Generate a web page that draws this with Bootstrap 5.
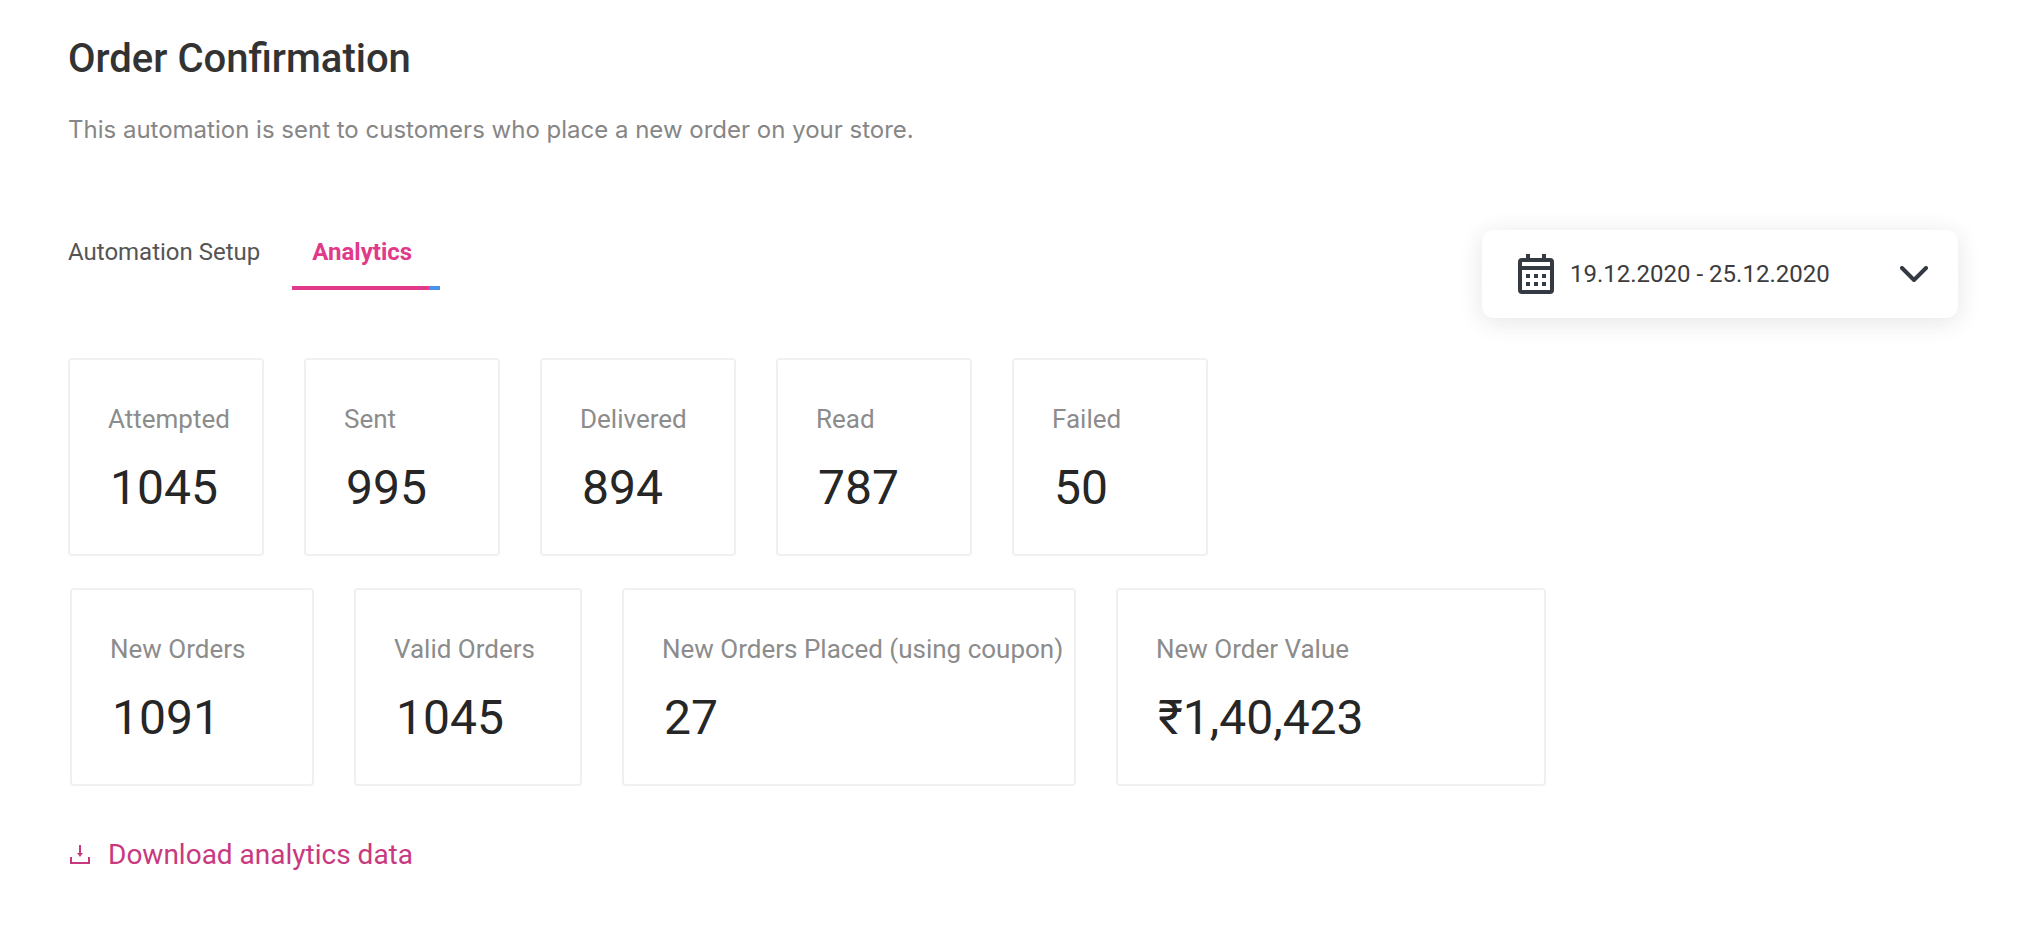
<!DOCTYPE html>
<html lang="en">
<head>
<meta charset="utf-8">
<meta name="viewport" content="width=device-width, initial-scale=1">
<title>Order Confirmation</title>
<link rel="stylesheet" href="https://cdn.jsdelivr.net/npm/bootstrap@5.3.0/dist/css/bootstrap.min.css">
<style>
  body { font-family: Roboto, "Liberation Sans", sans-serif; color: #262626; background: #fff; }
  .page { padding: 35px 84px 40px 68px; }
  .page-title { font-size: 40px; line-height: 48px; font-weight: 500; color: #333; }
  .page-note { font-family: Inter, "Liberation Sans", sans-serif; font-size: 24px; line-height: 32px; color: #868686; margin-top: 31px; }
  .toolbar { margin-top: 84px; }
  .view-tabs { gap: 32px; padding-top: 4px; }
  .view-tab { font-size: 24px; line-height: 36px; color: #555; padding-bottom: 16px; border-bottom: 4px solid transparent; }
  .view-tab.active { font-weight: 700; color: #e23a8a; padding-left: 20px; padding-right: 28px;
    border-image: linear-gradient(to right, #e23a8a 92%, #4a90ef 92%) 1; border-width: 0 0 4px; border-style: solid; }
  .range-btn { width: 476px; padding: 22px 30px 22px 36px; gap: 16px; border-radius: 12px; background: #fff; color: #3c3c3c;
    font-size: 24px; line-height: 44px; box-shadow: 0 4px 24px rgba(35, 40, 60, .12); border: 0; }
  .stats { gap: 40px; }
  .stat { width: 196px; min-height: 198px; padding: 43px 8px 38px 38px; border: 2px solid #f0f0f0; border-radius: 4px; }
  .stat dt { font-size: 26px; line-height: 32px; font-weight: 400; color: #8c8c8c; white-space: nowrap; }
  .stat dd { font-size: 48px; line-height: 56px; margin: 25px 0 0 2px; }
  .stats-orders { margin-top: 32px; padding-left: 2px; }
  .stat-new { width: 244px; }
  .stat-valid { width: 228px; }
  .stat-coupon { width: 454px; }
  .stat-value { width: 430px; }
  .download { margin-top: 53px; gap: 18px; font-size: 28px; line-height: 32px; color: #c8397f; }
</style>
</head>
<body>
<main class="page">
  <h1 class="page-title mb-0">Order Confirmation</h1>
  <p class="page-note mb-0">This automation is sent to customers who place a new order on your store.</p>

  <div class="toolbar d-flex flex-wrap justify-content-between align-items-start">
    <nav class="view-tabs d-flex" aria-label="Views">
      <a class="view-tab text-decoration-none" href="#setup">Automation Setup</a>
      <a class="view-tab active text-decoration-none" href="#analytics" aria-current="page">Analytics</a>
    </nav>
    <button class="range-btn d-flex align-items-center" type="button" aria-haspopup="true">
      <svg width="36" height="40" viewBox="0 0 36 40" fill="#343a42" aria-hidden="true">
        <path fill-rule="evenodd" d="M8 0h4v4h12V0h4v4h4a4 4 0 0 1 4 4v28a4 4 0 0 1-4 4H4a4 4 0 0 1-4-4V8a4 4 0 0 1 4-4h4zM4 8v4h28V8zM4 16v20h28V16z"/>
        <path d="M8 20h4v4H8zM16 20h4v4h-4zM24 20h4v4h-4zM8 28h4v4H8zM16 28h4v4h-4zM24 28h4v4h-4z"/>
      </svg>
      <span>19.12.2020 - 25.12.2020</span>
      <svg class="ms-auto" width="28" height="16" viewBox="0 0 28 16" fill="none" stroke="#343a42" stroke-width="4" stroke-linecap="round" stroke-linejoin="round" aria-hidden="true"><path d="M2 2l12 12L26 2"/></svg>
    </button>
  </div>

  <section id="analytics" class="pt-3 mt-4">
    <div class="stats d-flex flex-wrap">
      <dl class="stat mb-0"><dt>Attempted</dt><dd>1045</dd></dl>
      <dl class="stat mb-0"><dt>Sent</dt><dd>995</dd></dl>
      <dl class="stat mb-0"><dt>Delivered</dt><dd>894</dd></dl>
      <dl class="stat mb-0"><dt>Read</dt><dd>787</dd></dl>
      <dl class="stat mb-0"><dt>Failed</dt><dd>50</dd></dl>
    </div>
    <div class="stats stats-orders d-flex flex-wrap">
      <dl class="stat stat-new mb-0"><dt>New Orders</dt><dd>1091</dd></dl>
      <dl class="stat stat-valid mb-0"><dt>Valid Orders</dt><dd>1045</dd></dl>
      <dl class="stat stat-coupon mb-0"><dt>New Orders Placed (using coupon)</dt><dd>27</dd></dl>
      <dl class="stat stat-value mb-0"><dt>New Order Value</dt><dd>₹1,40,423</dd></dl>
    </div>
  </section>

  <a class="download d-inline-flex align-items-center text-decoration-none" href="#download">
    <svg width="22" height="20" viewBox="0 0 22 20" fill="none" stroke="currentColor" stroke-width="2" aria-hidden="true">
      <path d="M3 12v6h18v-6M12 0v9"/><path d="M9 8h6l-3 4z" fill="currentColor" stroke="none"/>
    </svg>
    <span>Download analytics data</span>
  </a>
</main>
<script src="https://cdn.jsdelivr.net/npm/bootstrap@5.3.0/dist/js/bootstrap.bundle.min.js"></script>
</body>
</html>
